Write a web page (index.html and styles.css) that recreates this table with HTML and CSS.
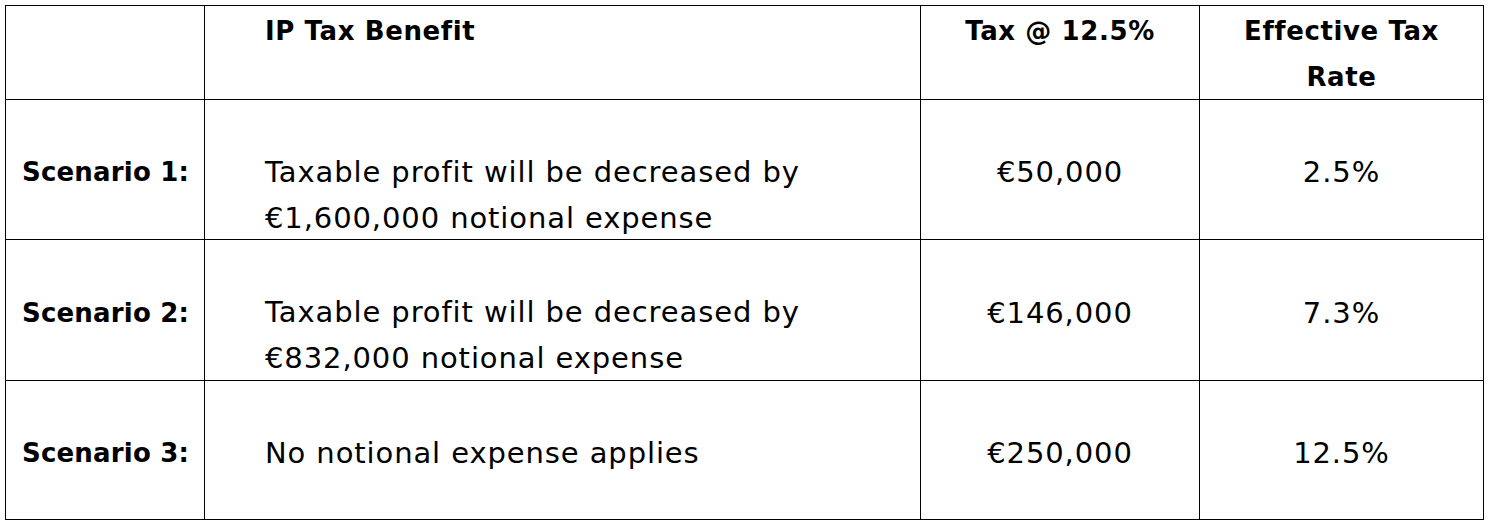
FILE: index.html
```html
<!DOCTYPE html>
<html lang="en">
<head>
<meta charset="utf-8">
<title>IP Tax Benefit</title>
<link rel="stylesheet" href="styles.css">
</head>
<body>
<div class="table" role="table">
  <div class="cell head" role="columnheader"></div>
  <div class="cell head desc" role="columnheader">IP Tax Benefit</div>
  <div class="cell head center" role="columnheader">Tax @ 12.5%</div>
  <div class="cell head center" role="columnheader">Effective Tax<br>Rate</div>

  <div class="cell label" role="rowheader">Scenario 1:</div>
  <div class="cell desc two" role="cell">Taxable profit will be decreased by<br>€1,600,000 notional expense</div>
  <div class="cell center" role="cell">€50,000</div>
  <div class="cell center" role="cell">2.5%</div>

  <div class="cell label" role="rowheader">Scenario 2:</div>
  <div class="cell desc two" role="cell">Taxable profit will be decreased by<br>€832,000 notional expense</div>
  <div class="cell center" role="cell">€146,000</div>
  <div class="cell center" role="cell">7.3%</div>

  <div class="cell label" role="rowheader">Scenario 3:</div>
  <div class="cell desc" role="cell">No notional expense applies</div>
  <div class="cell center" role="cell">€250,000</div>
  <div class="cell center" role="cell">12.5%</div>
</div>
</body>
</html>
```

FILE: styles.css
```css
html, body {
  margin: 0;
  padding: 0;
  background: #ffffff;
}

body {
  padding: 5px;
  font-family: "DejaVu Sans", "Liberation Sans", sans-serif;
  color: #000000;
}

.table {
  display: grid;
  grid-template-columns: 199px 716px 279px 284px;
  grid-template-rows: 94px 140px 141px 139px;
  width: max-content;
  border-left: 1px solid #000;
  border-top: 1px solid #000;
}

.cell {
  border-right: 1px solid #000;
  border-bottom: 1px solid #000;
  font-size: 29px;
  letter-spacing: 0.9px;
  line-height: 46px;
  display: flex;
  align-items: center;
  padding-top: 5px;
}

.head {
  align-items: flex-start;
  padding-top: 2px;
  font-weight: bold;
  font-size: 26px;
  letter-spacing: 0.6px;
}

.label {
  font-weight: bold;
  font-size: 26px;
  letter-spacing: 0.2px;
  padding-left: 16px;
}

.desc {
  padding-left: 60px;
}

.two {
  padding-top: 50px;
}

.center {
  justify-content: center;
  text-align: center;
}
```
